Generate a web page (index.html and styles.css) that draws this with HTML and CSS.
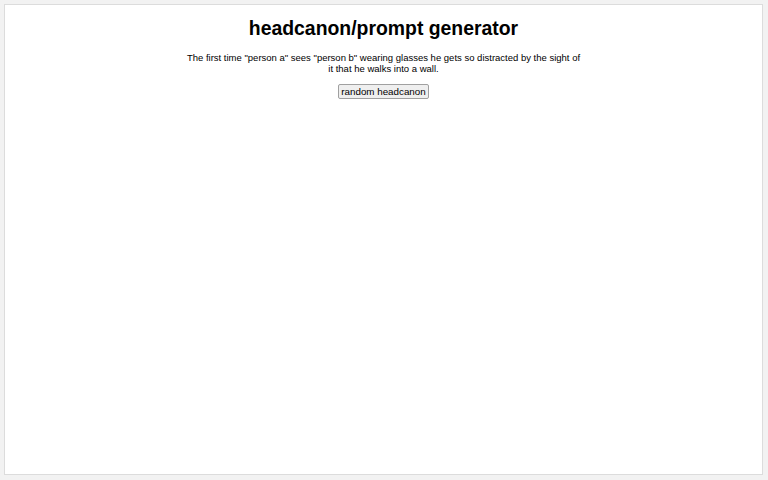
FILE: index.html
```html
<!DOCTYPE html>
<html>
<head>
<meta charset="utf-8">
<title>headcanon/prompt generator</title>
<link rel="stylesheet" href="styles.css">
</head>
<body>
<main class="page">
  <h1 class="title">headcanon/prompt generator</h1>
  <p class="prompt">The first time "person a" sees "person b" wearing glasses he gets so distracted by the sight of it that he walks into a wall.</p>
  <button class="generate" type="button">random headcanon</button>
</main>
</body>
</html>
```
FILE: styles.css
```css
html, body {
  margin: 0;
  height: 100%;
}
body {
  background: #f2f2f2;
  padding: 4px 5px 5px 4px;
  box-sizing: border-box;
  font-family: "Liberation Sans", Arial, sans-serif;
  color: #000;
}
.page {
  box-sizing: border-box;
  height: 100%;
  background: #fff;
  border: 1px solid #dcdcdc;
  display: flex;
  flex-direction: column;
  align-items: center;
  padding-top: 12px;
}
.title {
  margin: 0;
  font-size: 19.4px;
  font-weight: bold;
  line-height: 23px;
}
.prompt {
  margin: 12px 0 0;
  width: 400px;
  font-size: 9.5px;
  line-height: 11px;
  text-align: center;
}
.generate {
  margin-top: 10px;
  font-family: "Liberation Sans", Arial, sans-serif;
  font-size: 9.8px;
  line-height: 13px;
  padding: 0 2px;
  background: #efefef;
  border: 1px solid #a0a0a0;
  border-radius: 2px;
  color: #000;
}
```
